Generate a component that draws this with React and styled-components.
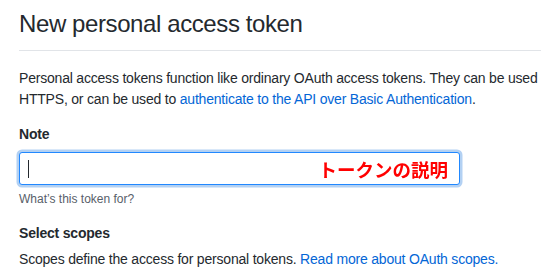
import React from 'react';
import styled, {createGlobalStyle} from 'styled-components';

const GlobalStyle = createGlobalStyle`
  html, body {
    margin: 0;
    padding: 0;
    background: #fff;
    overflow: hidden;
  }
  body {
    font-family: "Liberation Sans", Arial, sans-serif;
    color: #24292e;
  }
`

const App = () => {
	return(
		<>
			<GlobalStyle />
			<Page>
				<Subhead>
					<h2>New personal access token</h2>
				</Subhead>
				<Intro>
					Personal access tokens function like ordinary OAuth access tokens. They can be used
					<br />
					HTTPS, or can be used to <Link href="#">authenticate to the API over Basic Authentication</Link>.
				</Intro>
				<FormGroup>
					<Label>Note</Label>
					<InputWrap>
						<Input autoFocus defaultValue="" aria-label="Note" />
						<Caret />
						<Annotation>トークンの説明</Annotation>
					</InputWrap>
					<Hint>What’s this token for?</Hint>
				</FormGroup>
				<Scopes>
					<Label>Select scopes</Label>
					<Text>
						Scopes define the access for personal tokens. <Link href="#">Read more about OAuth scopes.</Link>
					</Text>
				</Scopes>
			</Page>
		</>
	)
}

export default App;

const Page = styled.div`
  padding: 6px 0 0 19px;
  font-size: 14px;
  line-height: 21px;
  letter-spacing: -0.2px;
`

const Subhead = styled.div`
  padding-bottom: 8px;
  border-bottom: 1px solid #e1e4e8;
  h2 {
    margin: 0;
    font-size: 24px;
    font-weight: 400;
    line-height: 36px;
    letter-spacing: -0.4px;
  }
`

const Intro = styled.p`
  margin: 17px 0 0;
  white-space: nowrap;
`

const Link = styled.a`
  color: #0366d6;
  text-decoration: none;
`

const FormGroup = styled.div`
  margin-top: 14px;
`

const Label = styled.div`
  font-weight: 700;
`

const InputWrap = styled.div`
  position: relative;
  width: 441px;
  margin-top: 7px;
`

const Input = styled.input`
  box-sizing: border-box;
  display: block;
  width: 100%;
  height: 33px;
  padding: 6px 8px;
  font: inherit;
  color: transparent;
  caret-color: transparent;
  background: #fff;
  border: 1px solid #2188ff;
  border-radius: 3px;
  box-shadow: 0 0 0 2.5px rgba(3, 102, 214, 0.3);
  outline: none;
`

const Caret = styled.span`
  position: absolute;
  left: 9px;
  top: 8px;
  width: 1px;
  height: 18px;
  background: #24292e;
`

const Annotation = styled.span`
  position: absolute;
  right: 12px;
  top: 50%;
  transform: translateY(-50%);
  color: #ff0000;
  font-family: "Noto Sans CJK JP", sans-serif;
  font-size: 18.5px;
  font-weight: 700;
  letter-spacing: 0;
  line-height: 1;
`

const Hint = styled.p`
  margin: 5px 0 0;
  font-size: 12px;
  line-height: 18px;
  letter-spacing: 0;
  color: #586069;
`

const Scopes = styled.div`
  margin-top: 15px;
  ${Label} {
    margin-bottom: 5px;
  }
`

const Text = styled.p`
  margin: 0;
`
